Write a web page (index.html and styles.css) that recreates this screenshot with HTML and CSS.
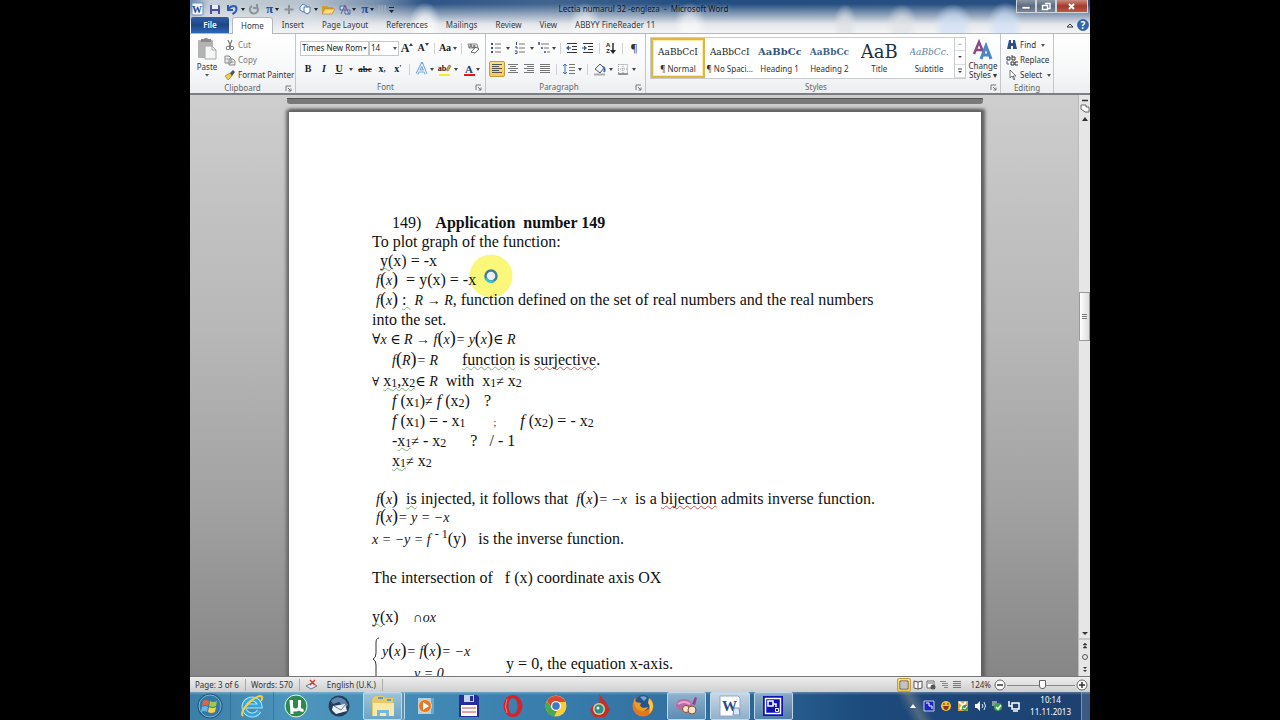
FILE: index.html
```html
<!DOCTYPE html>
<html lang="en">
<head>
<meta charset="utf-8">
<title>Lectia numarul 32 -engleza - Microsoft Word</title>
<link rel="stylesheet" href="styles.css">
</head>
<body>
<div class="desktop">
  <header class="titlebar">
    <div class="quick">
      <svg width="16" height="14" viewBox="0 0 16 14"><rect x="2" y="1" width="11" height="12" rx="1" fill="#f4f8fd" stroke="#6d8fbd"/><text x="2" y="11" class="wmark">W</text></svg>
      <button aria-label="Save"><svg width="18" height="14" viewBox="0 0 18 14"><path d="M4 3h9l1 1v8H4z" fill="#514fa0"/><path d="M6 3h6v4H6z" fill="#eef"/><path d="M6 9h6v3H6z" fill="#cdd4ee"/></svg></button>
      <button aria-label="Undo"><svg width="22" height="14" viewBox="0 0 22 14"><path d="M4 3v5h5M4.500 7c3-4 8-4 8 0 0 2-2 4-4 5" fill="none" stroke="#2f5bab" stroke-width="2"/><path d="M17 6h4l-2 3z" fill="#222"/></svg></button>
      <button aria-label="Repeat"><svg width="16" height="14" viewBox="0 0 16 14"><path d="M6 4a4 4 0 1 0 5 1M11 2v4H7" fill="none" stroke="#8d9297" stroke-width="2"/></svg></button>
      <button aria-label="Equation" class="pi">π<svg width="8" height="14" viewBox="0 0 8 14"><path d="M2 6h4l-2 3z" fill="#222"/></svg></button>
      <button aria-label="Add"><svg width="16" height="14" viewBox="0 0 16 14"><path d="M8 3v9M3.500 7.500h9" stroke="#8b9299" stroke-width="2"/></svg></button>
      <button aria-label="Shapes"><svg width="22" height="14" viewBox="0 0 22 14"><path d="M3 5l3-3 4 2v5l-4 1-3-2z" fill="#e9f1fa" stroke="#5d86b5"/><path d="M7 5h6v5l-3 2-3-2z" fill="#fff" stroke="#4c76ad"/><path d="M17 6h4l-2 3z" fill="#222"/></svg></button>
      <button aria-label="Open"><svg width="18" height="14" viewBox="0 0 18 14"><path d="M3 4h5l1 1h5v7H3z" fill="#d59a2c"/><path d="M3 12l3-5h10l-3 5z" fill="#fbdc7c" stroke="#b37f21" stroke-width=".6"/></svg></button>
      <button aria-label="Diagram"><svg width="20" height="14" viewBox="0 0 20 14"><path d="M3 4h5v4H3zM8 8h5v4H8z" fill="#bdd0ec" stroke="#476ca5"/><path d="M4 12l4-9 4 9" fill="none" stroke="#85527d"/><path d="M15 6h4l-2 3z" fill="#222"/></svg></button>
      <button aria-label="Symbol" class="pi">π<svg width="8" height="14" viewBox="0 0 8 14"><path d="M2 6h4l-2 3z" fill="#222"/></svg></button>
      <button aria-label="Customize toolbar"><svg width="20" height="14" viewBox="0 0 20 14"><path d="M3 3v9M6 3v9M9 3v9" stroke="#aab2b9"/><path d="M13 5.500h5" stroke="#222"/><path d="M13 8h5l-2.500 3z" fill="#222"/></svg></button>
    </div>
    <h1 class="title">Lectia numarul 32 -engleza&nbsp; -&nbsp; Microsoft Word</h1>
    <div class="winbtns">
      <button aria-label="Minimize"><svg width="18" height="11" viewBox="0 0 18 11"><rect x="5" y="5.500" width="8" height="2.500" fill="#fff" stroke="#445" stroke-width=".5"/></svg></button>
      <button aria-label="Restore"><svg width="18" height="11" viewBox="0 0 18 11"><path d="M8 2.500h5v5h-2M5.500 4.500h5v4h-5z" fill="none" stroke="#fff" stroke-width="1.400"/></svg></button>
      <button aria-label="Close" class="close"><svg width="30" height="11" viewBox="0 0 30 11"><path d="M12 3l5 5M17 3l-5 5" stroke="#fff" stroke-width="2"/></svg></button>
    </div>
  </header>

  <nav class="tabs">
    <button class="file">File</button>
    <button class="tab active">Home</button>
    <button class="tab">Insert</button>
    <button class="tab">Page Layout</button>
    <button class="tab">References</button>
    <button class="tab">Mailings</button>
    <button class="tab">Review</button>
    <button class="tab">View</button>
    <button class="tab">ABBYY FineReader 11</button>
    <button class="help first" aria-label="Collapse ribbon"><svg width="12" height="12" viewBox="0 0 12 12"><path d="M3 8l3-3 3 3z" fill="#fff" stroke="#333"/></svg></button>
    <button class="help" aria-label="Help"><svg width="14" height="12" viewBox="0 0 14 12"><circle cx="7" cy="6" r="5.500" fill="#2f66b6" stroke="#1d4586" stroke-width=".6"/><text x="4.500" y="9.500" class="qmark">?</text></svg></button>
  </nav>

  <section class="ribbon">
    <div class="group clip">
      <div class="body">
        <button class="paste"><svg width="22" height="24" viewBox="0 0 22 24"><rect x="2" y="3" width="15" height="18" rx="1" fill="#b3b3b3"/><path d="M5 2h3l1-1h2l1 1h3v3H5z" fill="#8b8b8b"/><path d="M9 9h7l4 4v9H9z" fill="#f6f6f6" stroke="#a8a8a8"/><path d="M16 9v4h4" fill="none" stroke="#a8a8a8"/></svg><span>Paste</span><svg width="6" height="6" viewBox="0 0 6 6"><path d="M1 2h4l-2 2.500z" fill="#555"/></svg></button>
        <div class="stack">
          <button class="dim"><svg width="12" height="12" viewBox="0 0 12 12"><path d="M4 1l3 7M8 1L5 8" stroke="#777" stroke-width="1.200"/><circle cx="4" cy="9" r="1.800" fill="none" stroke="#777"/><circle cx="8" cy="9" r="1.800" fill="none" stroke="#777"/></svg>Cut</button>
          <button class="dim"><svg width="12" height="12" viewBox="0 0 12 12"><path d="M1 2h4l2 2v5H1zM5 5h4l2 2v4H5z" fill="#ececec" stroke="#888"/><path d="M2.500 5h2M6.500 8h3" stroke="#888"/></svg>Copy</button>
          <button><svg width="12" height="12" viewBox="0 0 12 12"><path d="M1 7l5-3 2 3-4 4z" fill="#f3c948" stroke="#8f7430" stroke-width=".6"/><path d="M6 4l3-3 2 2-3 4z" fill="#4e5660"/></svg>Format Painter</button>
        </div>
      </div>
      <div class="label">Clipboard<svg class="launch" width="7" height="7" viewBox="0 0 7 7"><path d="M1 6V1h5M3 3l3 3M6 3.500V6H3.500" fill="none" stroke="#777"/></svg></div>
    </div>

    <div class="group font">
      <div class="body rows">
        <div class="row">
          <span class="combo wide"><select aria-label="Font"><option>Times New Rom</option></select></span>
          <span class="combo"><select aria-label="Font size"><option>14</option></select></span>
          <button class="w16 serif b11" aria-label="Grow font">A<svg width="4" height="10" viewBox="0 0 4 10"><path d="M0 3h4l-2-3z" fill="#345"/></svg></button>
          <button class="w16 serif b9" aria-label="Shrink font">A<svg width="4" height="10" viewBox="0 0 4 10"><path d="M0 0h4l-2 3z" fill="#345"/></svg></button>
          <i class="sep"></i>
          <button class="w20 serif b9" aria-label="Change case">Aa<svg width="6" height="10" viewBox="0 0 6 10"><path d="M2 4h4l-2 3z" fill="#444"/></svg></button>
          <i class="sep"></i>
          <button class="w16" aria-label="Clear formatting"><svg width="14" height="13" viewBox="0 0 14 13"><path d="M2 2h9l1 4H3z" fill="#eee" stroke="#888"/><text x="3" y="6" class="tiny">Aa</text><path d="M5 10l5-5 3 2-4 4z" fill="#fff" stroke="#666"/></svg></button>
        </div>
        <div class="row">
          <button class="w16 serif b9">B</button>
          <button class="w16 serif b9 it">I</button>
          <button class="w24 serif b9"><u>U</u><svg width="10" height="10" viewBox="0 0 10 10"><path d="M6 4h4l-2 3z" fill="#444"/></svg></button>
          <button class="w18 serif b8"><s>abc</s></button>
          <button class="w16 serif b9" aria-label="Subscript">x<small>,</small></button>
          <button class="w16 serif b9" aria-label="Superscript">x<small>'</small></button>
          <i class="sep"></i>
          <button class="w24 glow" aria-label="Text effects"><svg width="23" height="14" viewBox="0 0 23 14"><path d="M3 12L8 2l4 10M5 9h6" fill="none" stroke="#6fa8dc" stroke-width="3"/><path d="M3 12L8 2l4 10M5 9h6" fill="none" stroke="#fff" stroke-width="1"/><path d="M16 6h4l-2 3z" fill="#444"/></svg></button>
          <button class="w24 serif mark" aria-label="Highlight">ab<svg width="14" height="10" viewBox="0 0 14 10"><path d="M0 6l3-5 2 1-3 5z" fill="#caa53c" stroke="#665" stroke-width=".6"/><path d="M8 4h4l-2 3z" fill="#444"/></svg></button>
          <button class="w24 serif red" aria-label="Font color"><span>A</span><svg width="8" height="10" viewBox="0 0 8 10"><path d="M3 4h4l-2 3z" fill="#444"/></svg></button>
        </div>
      </div>
      <div class="label">Font<svg class="launch" width="7" height="7" viewBox="0 0 7 7"><path d="M1 6V1h5M3 3l3 3M6 3.500V6H3.500" fill="none" stroke="#777"/></svg></div>
    </div>

    <div class="group para">
      <div class="body rows">
        <div class="row">
          <button class="w24" aria-label="Bullets"><svg width="24" height="14" viewBox="0 0 24 14"><path d="M2 3h2M2 7h2M2 11h2" stroke="#334d7c" stroke-width="2"/><path d="M6 3h6M6 7h6M6 11h6" stroke="#777"/><path d="M17 6h4l-2 3z" fill="#444"/></svg></button>
          <button class="w24" aria-label="Numbering"><svg width="24" height="14" viewBox="0 0 24 14"><path d="M3.500 1v3M2 6h2v2M2 10h2v2.500H2" fill="none" stroke="#334d7c"/><path d="M6 3h6M6 7h6M6 11h6" stroke="#777"/><path d="M17 6h4l-2 3z" fill="#444"/></svg></button>
          <button class="w20" aria-label="Multilevel list"><svg width="20" height="14" viewBox="0 0 20 14"><path d="M2 1v3M5 6v2M8 10v2" stroke="#334d7c" stroke-width="1.500"/><path d="M4 3h8M7 7h5M10 11h3" stroke="#777"/><path d="M15 6h4l-2 3z" fill="#444"/></svg></button>
          <i class="sep"></i>
          <button class="w16" aria-label="Decrease indent"><svg width="14" height="14" viewBox="0 0 14 14"><path d="M2 2.500h10M7 5.500h5M7 8.500h5M2 11.500h10" stroke="#333"/><path d="M1 7l3-2.500v5z" fill="#345a9b"/><path d="M3 7h3" stroke="#345a9b"/></svg></button>
          <button class="w16" aria-label="Increase indent"><svg width="14" height="14" viewBox="0 0 14 14"><path d="M2 2.500h10M7 5.500h5M7 8.500h5M2 11.500h10" stroke="#333"/><path d="M6 7L3 4.500v5z" fill="#345a9b"/><path d="M1 7h3" stroke="#345a9b"/></svg></button>
          <i class="sep"></i>
          <button class="w16 sort" aria-label="Sort"><span>A<br>Z</span><svg width="6" height="12" viewBox="0 0 6 12"><path d="M3 1v8" stroke="#222" stroke-width="1.400"/><path d="M0 8h6l-3 4z" fill="#222"/></svg></button>
          <i class="sep"></i>
          <button class="w16 pil" aria-label="Show paragraph marks">¶</button>
        </div>
        <div class="row">
          <button class="w16 on" aria-label="Align left"><svg width="12" height="12" viewBox="0 0 12 12"><path d="M1 1.500h10M1 3.500h7M1 5.500h10M1 7.500h7M1 9.500h10" stroke="#555"/></svg></button>
          <button class="w16" aria-label="Center"><svg width="12" height="12" viewBox="0 0 12 12"><path d="M1 1.500h10M3 3.500h6M1 5.500h10M3 7.500h6M1 9.500h10" stroke="#777"/></svg></button>
          <button class="w16" aria-label="Align right"><svg width="12" height="12" viewBox="0 0 12 12"><path d="M1 1.500h10M4 3.500h7M1 5.500h10M4 7.500h7M1 9.500h10" stroke="#777"/></svg></button>
          <button class="w16" aria-label="Justify"><svg width="12" height="12" viewBox="0 0 12 12"><path d="M1 1.500h10M1 3.500h10M1 5.500h10M1 7.500h10M1 9.500h10" stroke="#777"/></svg></button>
          <i class="sep"></i>
          <button class="w24" aria-label="Line spacing"><svg width="22" height="14" viewBox="0 0 22 14"><path d="M4 2v10M2 4l2-2 2 2M2 10l2 2 2-2" fill="none" stroke="#3d6db0"/><path d="M8 2.500h6M8 5.500h6M8 8.500h6M8 11.500h6" stroke="#777"/><path d="M17 6h4l-2 3z" fill="#444"/></svg></button>
          <i class="sep"></i>
          <button class="w24" aria-label="Shading"><svg width="22" height="14" viewBox="0 0 22 14"><path d="M3 7l5-5 4 4-4 5z" fill="#eef3fa" stroke="#456"/><path d="M11 5c2 1 2 3 1 5" stroke="#3d6db0" fill="none" stroke-width="2"/><path d="M2 12.500h11" stroke="#aaa" stroke-width="2"/><path d="M17 6h4l-2 3z" fill="#444"/></svg></button>
          <button class="w24" aria-label="Borders"><svg width="22" height="14" viewBox="0 0 22 14"><path d="M2.500 2.500h9v9M2.500 2v10M7 2v10M2 7h10" fill="none" stroke="#999" stroke-dasharray="1 1"/><path d="M2 12h10" stroke="#333"/><path d="M16 6h4l-2 3z" fill="#444"/></svg></button>
        </div>
      </div>
      <div class="label">Paragraph<svg class="launch" width="7" height="7" viewBox="0 0 7 7"><path d="M1 6V1h5M3 3l3 3M6 3.500V6H3.500" fill="none" stroke="#777"/></svg></div>
    </div>

    <div class="group styles">
      <div class="body">
        <div class="gallery">
          <button class="style sel"><b class="p">AaBbCcI</b><span>¶ Normal</span></button>
          <button class="style"><b class="p">AaBbCcI</b><span>¶ No Spaci...</span></button>
          <button class="style"><b class="p h1">AaBbCc</b><span>Heading 1</span></button>
          <button class="style"><b class="p h2">AaBbCc</b><span>Heading 2</span></button>
          <button class="style"><b class="p tt">AaB</b><span>Title</span></button>
          <button class="style"><b class="p st">AaBbCc.</b><span>Subtitle</span></button>
          <div class="spin">
            <button aria-label="Previous styles"><svg width="6" height="6" viewBox="0 0 6 6"><path d="M1 4h4l-2-2z" fill="#bbb"/></svg></button>
            <button aria-label="Next styles"><svg width="6" height="6" viewBox="0 0 6 6"><path d="M1 2h4l-2 2z" fill="#444"/></svg></button>
            <button aria-label="More styles"><svg width="6" height="6" viewBox="0 0 6 6"><path d="M1 1h4" stroke="#444"/><path d="M1 3h4l-2 2z" fill="#444"/></svg></button>
          </div>
        </div>
        <button class="change"><svg width="22" height="22" viewBox="0 0 22 22"><path d="M2 15L7 3l5 12M4 11h7" fill="none" stroke="#8b4a87" stroke-width="2.500"/><path d="M9 20l5-13 5 13M11 16h7" fill="none" stroke="#4a86c8" stroke-width="3"/></svg><span>Change<br>Styles ▾</span></button>
      </div>
      <div class="label">Styles<svg class="launch" width="7" height="7" viewBox="0 0 7 7"><path d="M1 6V1h5M3 3l3 3M6 3.500V6H3.500" fill="none" stroke="#777"/></svg></div>
    </div>

    <div class="group edit">
      <div class="body">
        <div class="stack">
          <button><svg width="12" height="12" viewBox="0 0 12 12"><path d="M3 1h2v3h2V1h2l2 9H7V7H5v3H1z" fill="#2d4f86"/></svg>Find<svg width="8" height="8" viewBox="0 0 8 8"><path d="M3 3h4l-2 3z" fill="#555"/></svg></button>
          <button><svg width="12" height="12" viewBox="0 0 12 12"><path d="M1 3h3v3H1zM6 1v5h3V3H6M5 8h3v3H5zM12 8H9v3h3" fill="none" stroke="#333"/><path d="M1 7v3h2" fill="none" stroke="#3d6db0"/></svg>Replace</button>
          <button><svg width="12" height="12" viewBox="0 0 12 12"><path d="M4 1v8l2-2 2 4 1-1-2-3h3z" fill="#fff" stroke="#555" stroke-width=".8"/></svg>Select<svg width="8" height="8" viewBox="0 0 8 8"><path d="M3 3h4l-2 3z" fill="#555"/></svg></button>
        </div>
      </div>
      <div class="label">Editing</div>
    </div>
  </section>

  <main class="work">
    <div class="canvas">
      <div class="prev"></div>
      <article class="page">
        <p class="in20"><span>149)</span><strong class="g14">Application&nbsp; number 149</strong></p>
        <p>To plot graph of the function:</p>
        <p class="in8"><span><span class="sq green">y(</span>x) = -x</span></p>
        <p class="busyline"><i class="m in4">f<q>(</q>x<q>)</q></i><span class="g8">= y(x) = -x</span><svg class="busy" width="44" height="44" viewBox="0 0 44 44"><circle cx="22" cy="22" r="21.500" fill="#fbf77a"/><circle cx="22" cy="22" r="5.500" fill="#eef" stroke="#3f7f9c" stroke-width="2.500"/><path d="M17 24a5.500 5.500 0 0 0 8 3" fill="none" stroke="#30c5d2" stroke-width="2.500"/></svg></p>
        <p class="l21"><i class="m in4">f<q>(</q>x<q>)</q></i><span class="sq green g4">:&nbsp;</span><i class="m g4">R <em>→</em> R</i><span>, function defined on the set of real numbers and the real numbers</span></p>
        <p class="l20">into the set.</p>
        <p><i class="m">∀x ∈ R <em>→</em> f<q>(</q>x<q>)</q>= y<q>(</q>x<q>)</q>∈ R</i></p>
        <p class="l21 in20"><i class="m">f<q>(</q>R<q>)</q>= R</i><span class="sq green g24">function</span><span class="g4">is <span class="sq">surjective</span>.</span></p>
        <p class="l21"><i class="m n">∀</i><span class="sq green g4">x<sub>1</sub>,x<sub>2</sub></span><i class="m"><em>∈</em> R</i><span class="g8">with&nbsp; x<sub>1</sub><em>≠</em> x<sub>2</sub></span></p>
        <p class="in20"><span><i>f</i> (x<sub>1</sub>)<em>≠</em> <i>f</i> (x<sub>2</sub>)</span><span class="g14">?</span></p>
        <p class="l21 in20"><span><i>f</i> (x<sub>1</sub>) = - x<sub>1</sub></span><small class="g28">;</small><span class="g24"><i>f</i> (x<sub>2</sub>) = - x<sub>2</sub></span></p>
        <p class="l20 in20"><span>-<span class="sq green">x<sub>1</sub></span><em>≠</em> - x<sub>2</sub></span><span class="g24">?</span><span class="g12">/ - 1</span></p>
        <p class="in20"><span><span class="sq green">x<sub>1</sub></span><em>≠</em> x<sub>2</sub></span></p>
        <p></p>
        <p><i class="m in4">f<q>(</q>x<q>)</q></i><span class="g8"><span class="sq green">is</span> injected, it follows that</span><i class="m g8">f<q>(</q>x<q>)</q>= −x</i><span class="g8">is a <span class="sq">bijection</span> admits inverse function.</span></p>
        <p class="l20"><i class="m in4">f<q>(</q>x<q>)</q>= y = −x</i></p>
        <p class="l21"><i class="m">x = −y = f</i><span class="g4"><sup>- 1</sup>(y)</span><span class="g12">is the inverse function.</span></p>
        <p></p>
        <p class="l20"><span>The intersection of</span><span class="g12">f (x) coordinate axis OX</span></p>
        <p></p>
        <p><span><span class="sq green">y(</span>x)</span><i class="m g14">∩ox</i></p>
        <div class="system"><svg width="8" height="52" viewBox="0 0 8 52"><path d="M7 1Q4 1 4 6v10q0 5-3 6 3 1 3 6v14q0 5 3 5" fill="none" stroke="#333"/></svg><div><i class="m">y<q>(</q>x<q>)</q>= f<q>(</q>x<q>)</q>= −x</i><i class="m in32">y = 0</i></div><span>y = 0, the equation x-axis.</span></div>
      </article>
    </div>
    <aside class="scroll">
      <svg width="12" height="24" viewBox="0 0 12 24"><path d="M3 2.500h6" stroke="#333" stroke-width="1.500"/><path d="M2 7h5v2h3v5H6l-4-3z" fill="#fff" stroke="#666"/><path d="M3 23h6l-3-4z" fill="#333"/></svg>
      <div class="track"><div class="thumb"></div></div>
      <svg width="12" height="48" viewBox="0 0 12 48"><path d="M3 4h6l-3 3z" fill="#333"/><path d="M0 11h12" stroke="#aaa"/><path d="M4 17l2-2 2 2zM4 20l2-2 2 2z" fill="#333" stroke="#333" stroke-width=".5"/><circle cx="6" cy="29" r="2.500" fill="none" stroke="#555"/><path d="M4 39h4l-2 2zM4 42h4l-2 2z" fill="#333"/></svg>
    </aside>
  </main>

  <footer class="status">
    <span class="cell">Page: 3 of 6</span><span class="cell">Words: 570</span>
    <span class="cell"><svg width="14" height="12" viewBox="0 0 14 12"><path d="M1 7l5 3 6-3-5-3z" fill="#dfe8f4" stroke="#678"/><path d="M5 1l5 5M10 1L5 6" stroke="#d43c2e" stroke-width="1.500"/></svg><span class="g8">English (U.K.)</span></span>
    <div class="views">
      <button class="on" aria-label="Print layout"><svg width="12" height="12" viewBox="0 0 12 12"><path d="M2 2h8v8H2z" fill="#fff" stroke="#555"/><path d="M3 4h6M3 6h6M3 8h6" stroke="#888"/></svg></button>
      <button aria-label="Full screen reading"><svg width="12" height="12" viewBox="0 0 12 12"><path d="M2 2l4 1 4-1v7l-4 1-4-1zM6 3v7" fill="#fff" stroke="#555"/></svg></button>
      <button aria-label="Web layout"><svg width="12" height="12" viewBox="0 0 12 12"><path d="M2 2h7v7H2zM3 4h5" fill="#fff" stroke="#666"/><circle cx="8" cy="8" r="2.500" fill="#555"/></svg></button>
      <button aria-label="Outline"><svg width="12" height="12" viewBox="0 0 12 12"><path d="M2 2.500h6M4 4.500h6M4 6.500h6M6 8.500h4" stroke="#888"/></svg></button>
      <button aria-label="Draft"><svg width="12" height="12" viewBox="0 0 12 12"><path d="M2 2.500h8M2 4.500h8M2 6.500h8M2 8.500h8" stroke="#777"/></svg></button>
      <span class="zoom">124%</span>
      <button aria-label="Zoom out"><svg width="12" height="12" viewBox="0 0 12 12"><circle cx="6" cy="6" r="5" fill="#fff" stroke="#666"/><path d="M3 6h6" stroke="#333" stroke-width="1.500"/></svg></button>
      <input type="range" min="0" max="100" value="53" aria-label="Zoom">
      <button aria-label="Zoom in"><svg width="12" height="12" viewBox="0 0 12 12"><circle cx="6" cy="6" r="5" fill="#fff" stroke="#666"/><path d="M3 6h6M6 3v6" stroke="#333" stroke-width="1.500"/></svg></button>
    </div>
  </footer>

  <footer class="taskbar">
    <button class="start" aria-label="Start"><svg width="28" height="26" viewBox="0 0 28 26"><circle cx="14" cy="13" r="12.500" fill="#23567f"/><circle cx="14" cy="13" r="11" fill="#3279a8" stroke="#7fb6d2"/><path d="M7 8q3-2 6 0l-1 5q-3-2-6 0z" fill="#e8623a"/><path d="M14 8q3 2 7 0l-1 5q-4 2-7 0z" fill="#9ccb48"/><path d="M6 14q3-2 6 0l-1 5q-3-2-6 0z" fill="#68b6e8"/><path d="M13 14q3 2 7 0l-1 5q-4 2-7 0z" fill="#f9d24a"/></svg></button>
    <button class="ie" aria-label="Internet Explorer"><svg width="24" height="24" viewBox="0 0 24 24"><path d="M19 17a8 8 0 1 1 1-5H7" fill="none" stroke="#a9e6fb" stroke-width="5"/><path d="M19 17a8 8 0 1 1 1-5H7" fill="none" stroke="#35a5de" stroke-width="3"/><path d="M3 22C-1 18 11 4 20 2q4 0 1 5" fill="none" stroke="#f4cf45" stroke-width="2"/></svg></button>
    <div class="apps">
      <button aria-label="uTorrent"><svg width="24" height="24" viewBox="0 0 24 24"><circle cx="12" cy="12" r="11" fill="#2b8a4e" stroke="#e8f5ec"/><path d="M8 20L7 6M7.500 6v6q0 4 4 4t4-4V6M15.500 13q0 4 4 3" fill="none" stroke="#fff" stroke-width="3"/></svg></button>
      <button aria-label="Thunderbird"><svg width="24" height="24" viewBox="0 0 24 24"><circle cx="12" cy="12" r="10.500" fill="#263c59"/><path d="M4 7q6-7 14-1l3 5-3 3-6-6-6 2z" fill="#5c86ad"/><path d="M6 12l12-2 2 7-11 3-4-4z" fill="#edf2f7"/><path d="M7 12l7 4 5-6" fill="none" stroke="#667c94"/></svg></button>
      <button class="open multi" aria-label="Windows Explorer"><svg width="26" height="24" viewBox="0 0 26 24"><path d="M2 5l3-3h8l2 2h8v18H2z" fill="#e8c765"/><path d="M3 9h21v13H3z" fill="#fae9a6"/><path d="M7 22v-6h12v6h-3v-3h-6v3z" fill="#75b9df"/><path d="M8 4h5M17 6h4" stroke="#5c9bc2" stroke-width="2"/></svg></button>
      <button aria-label="Media Player"><svg width="22" height="22" viewBox="0 0 22 22"><path d="M6 3h13v16H6z" fill="#65a8cf"/><path d="M3 3h13v16H3z" fill="#a9d2e8"/><circle cx="10" cy="11" r="6.500" fill="#e67925" stroke="#f8d3a5"/><path d="M8 7l6 4-6 4z" fill="#fff"/></svg></button>
      <button aria-label="Total Commander"><svg width="22" height="24" viewBox="0 0 22 24"><path d="M1 1h18l2 2v20H1z" fill="#252d9b"/><path d="M6 1h10v7H6z" fill="#c7d3e5"/><path d="M12 2h3v5h-3z" fill="#252d9b"/><path d="M3 11h16v11H3z" fill="#fff"/><path d="M4 14h14M4 18h14" stroke="#c44" /></svg></button>
      <button aria-label="Opera"><svg width="22" height="24" viewBox="0 0 22 24"><path fill-rule="evenodd" d="M11 1a9.500 11 0 1 0 0 22 9.500 11 0 1 0 0-22zm0 3c6 0 6 16 0 16s-6-16 0-16z" fill="#d5232c"/><path d="M5 5q-3 7 0 14" fill="none" stroke="#f47c78"/></svg></button>
      <button aria-label="Chrome"><svg width="24" height="24" viewBox="0 0 24 24"><circle cx="12" cy="12" r="10.500" fill="#f7cf39"/><path d="M3 7a10.500 10.500 0 0 1 18.500 1H12l-4 6z" fill="#dd4635"/><path d="M3 7l6 9 4 1-3 5.500A10.500 10.500 0 0 1 3 7z" fill="#4aa853"/><circle cx="12" cy="12" r="5" fill="#fff"/><circle cx="12" cy="12" r="3.800" fill="#3f78c4"/></svg></button>
      <button aria-label="FireTorrent"><svg width="24" height="24" viewBox="0 0 24 24"><path d="M11 0q7 8 8 10l3 6-5 7H6l-4-7 3-5 3 3q5-8 3-14z" fill="#c42e2c"/><circle cx="11" cy="15" r="6" fill="#d9d09a"/><circle cx="11" cy="15" r="4.500" fill="#2a8d86"/><circle cx="10" cy="14" r="1.500" fill="#dff"/></svg></button>
      <button aria-label="Firefox"><svg width="24" height="24" viewBox="0 0 24 24"><circle cx="12" cy="12" r="10.500" fill="#e77819"/><circle cx="12" cy="9" r="8" fill="#25558e"/><path d="M3 4l2 4 5 1-1 3 3 2 5-1q-2 5-8 4-7-3-6-13z" fill="#ee9a27"/><path d="M18 4q8 8 0 16 2-8-1-11z" fill="#f7ca43"/><path d="M9 3q5-2 7 1l-3 3z" fill="#75aad2"/></svg></button>
      <button class="open" aria-label="Image viewer"><svg width="24" height="22" viewBox="0 0 24 22"><ellipse cx="9" cy="10" rx="8" ry="6" fill="#b96ba4"/><path d="M3 9q6-4 12 0" stroke="#eac" fill="none" stroke-width="2"/><circle cx="11" cy="14" r="3.500" fill="#f4e5c4" stroke="#8b4a38"/><circle cx="17" cy="15" r="4" fill="#f4e5c4" stroke="#8b4a38"/><path d="M17 9l3-7 2 1-2 7z" fill="#9a3d8e"/></svg></button>
      <button class="open bright" aria-label="Microsoft Word"><svg width="24" height="24" viewBox="0 0 24 24"><path d="M2 2h18l2 2v18H2z" fill="#fff" stroke="#8da9c9"/><text x="4" y="17" class="wbig">W</text><path d="M16 14h5l1 7h-7z" fill="#dbe7f6" stroke="#6a8fbd"/></svg></button>
      <button class="open" aria-label="Screen recorder"><svg width="22" height="22" viewBox="0 0 22 22"><path d="M1 1h20v20H1z" fill="#0f14b8"/><path d="M3.500 3.500h15v15h-15z" fill="none" stroke="#fff" stroke-width="1.500"/><path d="M6 6h5v5H6zM11 9h3v3" fill="none" stroke="#fff" stroke-width="1.500"/><path d="M13.500 13.500h3v3h-3z" fill="none" stroke="#fff"/></svg></button>
    </div>
    <div class="tray">
      <svg width="10" height="12" viewBox="0 0 10 12"><path d="M2 8h6L5 4z" fill="#fff"/></svg>
      <svg width="12" height="12" viewBox="0 0 12 12"><path d="M1 1h10v10H1z" fill="#1a25c8" stroke="#ccd"/><path d="M3 3h3v3h3v3" fill="none" stroke="#fff"/></svg>
      <svg width="12" height="12" viewBox="0 0 12 12"><circle cx="6" cy="6" r="5" fill="#f3bd35"/><path d="M3 6h6q-1 4-3 4T3 6" fill="#85361c"/><path d="M4 3v2M8 3v2" stroke="#532"/></svg>
      <svg width="12" height="12" viewBox="0 0 12 12"><path d="M1 1h10v10H1z" fill="#e6a23b"/><path d="M2 2l5 4M9 2L3 9" stroke="#fff" stroke-width="2"/><circle cx="8" cy="8" r="3" fill="#3c9b42"/><path d="M6 8l2 1 2-3" fill="none" stroke="#fff"/></svg>
      <svg width="12" height="12" viewBox="0 0 12 12"><path d="M1 4h2l3-3v10L3 8H1z" fill="#fff"/><path d="M8 4q2 2 0 4M10 2q3 4 0 8" fill="none" stroke="#dce8f3"/></svg>
      <svg width="12" height="12" viewBox="0 0 12 12"><path d="M1 1h5v5H1z" fill="#8b98a2"/><circle cx="7" cy="7" r="4" fill="#39a447"/><path d="M5 7l2 2 3-4" fill="none" stroke="#fff" stroke-width="1.500"/></svg>
      <svg width="12" height="12" viewBox="0 0 12 12"><path d="M4 3h7v6H4zM1 1v5h3M5 11h5" fill="none" stroke="#fff" stroke-width="1.500"/></svg>
      <div class="clock">10:14<br>11.11.2013</div>
      <button class="peek" aria-label="Show desktop"></button>
    </div>
  </footer>
</div>
</body>
</html>
```
FILE: styles.css
```css
* { box-sizing: border-box; }
html, body { margin: 0; height: 100%; background: #000; }
body { display: flex; justify-content: center; font: 8px/12px "Noto Sans", "Open Sans", sans-serif; color: #333; }
button { font: inherit; color: inherit; background: none; border: 0; padding: 0; display: inline-flex; align-items: center; justify-content: center; white-space: nowrap; }
svg { display: block; flex: none; }
p { margin: 0; }

.desktop { height: 100vh; aspect-ratio: 5 / 4; display: flex; flex-direction: column; overflow: hidden; background:
  radial-gradient(ellipse 12px 22px at 655px 26px, #dde0e2aa 40%, transparent 100%),
  radial-gradient(ellipse 16px 22px at 712px 26px, #dfe1e4aa 40%, transparent 100%),
  radial-gradient(ellipse 20px 22px at 763px 26px, #cfe0f6aa 50%, transparent 100%),
  radial-gradient(ellipse 18px 24px at 815px 26px, #cfe0f6aa 50%, transparent 100%),
  radial-gradient(ellipse 16px 24px at 395px 26px, #ffffff88 40%, transparent 100%),
  radial-gradient(ellipse 16px 24px at 500px 26px, #ffffff88 40%, transparent 100%),
  radial-gradient(ellipse 16px 24px at 235px 26px, #ffffffaa 40%, transparent 100%),
  linear-gradient(#fff0 4px, #e4e7ea 24px, #f5f5f6 34px),
  linear-gradient(90deg, #6889ad 0, #c3ced6 20px, #b6c2cd 120px, #7790ad 185px, #2e5586 235px, #416590 360px, #234d80 500px, #2a5182); }

.titlebar { display: flex; height: 17px; }
.quick { flex: 1 1 0; display: flex; align-items: center; }
.pi { font: bold 13px/14px "Liberation Serif", serif; color: #234c95; padding-left: 4px; }
.wmark { font: bold 10px "Liberation Serif", serif; fill: #1d4b93; }
.title { margin: 0; padding-left: 9px; font-size: 8px; font-weight: 400; line-height: 17px; color: #101820; text-shadow: 0 0 4px #c8d5e4aa; }
.winbtns { flex: 1 1 0; display: flex; justify-content: flex-end; padding-right: 2px; height: 13px; }
.winbtns button { background: linear-gradient(#8c97a5, #5d6c80 50%, #78879a); border: 1px solid #d0d5da; border-top: 0; }
.winbtns .close { background: linear-gradient(#c88d80, #a53a2a 50%, #b95a46); }

.tabs { display: flex; height: 17px; align-items: stretch; padding-left: 1px; border-bottom: 1px solid #b4b8bd; font-size: 8px; }
.file { width: 38px; color: #fff; font-weight: 600; background: linear-gradient(#2f5fa8, #1d4688 50%, #2d68b8); border-radius: 2px 2px 0 0; }
.tab { padding: 0 9px; color: #33383e; }
.tab.active { background: #fff; border: 1px solid #b4b8bd; border-bottom: 0; border-radius: 3px 3px 0 0; margin: 0 0 -1px 3px; padding: 0 8px; }
.help.first { margin-left: auto; }
.qmark { font: bold 10px "Noto Sans", sans-serif; fill: #fff; }

.ribbon { display: flex; height: 61px; background: linear-gradient(#fff, #f7f8f9 60%, #eceef0); border-bottom: 2px solid #7c7f83; }
.group { display: flex; flex-direction: column; border-right: 1px solid #c3c6ca; padding-top: 3px; }
.body { flex: 1; display: flex; }
.label { height: 12px; text-align: center; color: #666; position: relative; }
.launch { position: absolute; right: 3px; top: 3px; }
.clip { flex: 0 0 106px; }
.font { flex: 0 0 190px; padding-left: 4px; }
.para { flex: 0 0 160px; padding-left: 3px; }
.para .label { padding-right: 16px; }
.font .label { padding-right: 14px; }
.styles .label { padding-right: 18px; }
.styles { flex: 1 1 0; padding-left: 4px; }
.edit { flex: 0 0 53px; }
.ribbon::after { content: ""; flex: 0 0 36px; }
.paste { flex-direction: column; justify-content: flex-start; width: 34px; line-height: 11px; }
.stack { display: flex; flex-direction: column; }
.stack button { height: 15px; gap: 2px; justify-content: flex-start; }
.edit .stack { padding-left: 5px; }
.dim { color: #777; }

.rows { flex-direction: column; gap: 5px; padding-top: 3px; }
.row { display: flex; height: 16px; align-items: center; }
.row button { height: 16px; flex: none; }
.combo { position: relative; width: 30px; height: 15px; border: 1px solid #c4c8cc; background: #fff; }
.combo.wide { width: 69px; }
.combo::after { content: ""; position: absolute; right: 1px; top: 5px; border: 2px solid transparent; border-top: 3px solid #555; }
select { appearance: none; width: 100%; height: 13px; border: 0; background: none; padding: 0 0 0 1px; font: inherit; color: #222; }
.w16 { width: 16px; }
.w18 { width: 18px; }
.w20 { width: 20px; }
.w24 { width: 24px; }
.row .sep { width: 1px; height: 11px; background: #cfd2d5; margin: 0 3px; flex: none; }
.serif { font-family: "Liberation Serif", serif; color: #222; }
.b11 { font-size: 12px; font-weight: 700; }
.b9 { font-size: 10px; font-weight: 700; }
.b8 { font-size: 9px; font-weight: 700; }
.it { font-style: italic; }
.mark { font-weight: 700; background: linear-gradient(#f6ee24, #f6ee24) 2px 13px / 11px 2px no-repeat; }
.red { font-size: 11px; font-weight: 700; color: #243f6c; background: linear-gradient(#e11, #e11) 3px 13px / 11px 2px no-repeat; }
.sort span { font-size: 6px; line-height: 6px; font-weight: 700; }
.pil { font-size: 11px; }
.row .on, .views .on { background: linear-gradient(#fbe08a, #f9c94e); border: 1px solid #c39b3f; border-radius: 2px; }

.gallery { flex: 1; display: flex; height: 42px; border: 1px solid #c9cccf; background: #fff; }
.style { flex: 1 1 0; min-width: 0; flex-direction: column; justify-content: flex-end; overflow: hidden; line-height: 13px; padding-bottom: 3px; }
.sel { border: 2px solid #dfb545; padding-bottom: 1px; box-shadow: inset 0 0 0 1px #fbeaa6; }
.p { font: 9px/20px "DejaVu Serif", serif; color: #222; height: 20px; max-width: 43px; overflow: hidden; }
.h1 { font-weight: 700; font-size: 10px; color: #33557f; }
.h2 { color: #3f648e; font-weight: 700; }
.tt { font-size: 18px; color: #1e2f45; }
.st { font-style: italic; color: #5b84a5; }
.spin { width: 11px; display: flex; flex-direction: column; border-left: 1px solid #c9cccf; }
.spin button { flex: 1; border-bottom: 1px solid #d9dbdd; }
.change { width: 34px; flex-direction: column; line-height: 9px; height: 43px; }
.tiny { font: bold 5px "Noto Sans", sans-serif; fill: #555; }

.work { flex: 1; min-height: 0; display: flex; background: linear-gradient(#cecece, #c2c2c2 20%, #b8b8b8 40%, #a2a2a2 70%, #868686); }
.canvas { flex: 1; min-width: 0; padding: 3px 97px 0 99px; overflow: hidden; }
.prev { height: 6px; background: #77797a; border-top: 1px solid #555; border-radius: 0 0 3px 3px; margin: 0 -2px 7px; }
.page { position: relative; z-index: 0; background: #fff; min-height: 100%; border-top: 1px solid #666; box-shadow: 2px 0 3px 2px #606060, -2px 0 3px 1px #707070; padding: 101px 80px 0 83px; font: 16px/19px "Liberation Serif", "DejaVu Serif", serif; color: #111; }
.page p { display: flex; align-items: baseline; height: 19px; white-space: nowrap; position: relative; }
.page p.l20 { height: 20px; line-height: 20px; }
.page p.l21 { height: 21px; line-height: 21px; }
.page .m { font-size: 14px; }
.m q { quotes: none; font-style: normal; font-size: 18px; line-height: 1px; }
.m q::before, .m q::after { content: none; }
.page em { font-style: normal; font-size: 14px; line-height: 1px; }
.page .n { font-style: normal; font-size: 12px; }
.page sub, .page sup { font-size: 12px; line-height: 1px; }
.page sub { vertical-align: -1px; }
.page small { font-size: 10px; }
.sq { text-decoration: underline wavy #d65050 1px; text-underline-offset: 1px; text-decoration-skip-ink: none; }
.green { text-decoration-color: #7fae7f; }
.page .in4 { margin-left: 4px; }
.page .in8 { padding-left: 8px; }
.page .in20 { padding-left: 20px; }
.page .in32 { padding-left: 32px; }
.g4 { margin-left: 4px; }
.g8 { margin-left: 8px; }
.g12 { margin-left: 12px; }
.g14 { margin-left: 14px; }
.g24 { margin-left: 24px; }
.g28 { margin-left: 28px; }
.busy { position: absolute; left: 97px; top: -16px; z-index: -1; }
.system { display: flex; gap: 36px; align-items: center; height: 54px; margin-top: 10px; }
.system svg { margin-right: -34px; }
.system div { display: flex; flex-direction: column; line-height: 22px; }

.scroll { width: 12px; background: #e6e6e6; border-left: 1px solid #bbb; display: flex; flex-direction: column; padding-top: 3px; }
.track { flex: 1; display: flex; flex-direction: column; padding-top: 170px; }
.thumb { height: 49px; border: 1px solid #999; background: linear-gradient(#777, #777) 50% 45% / 5px 1px no-repeat, linear-gradient(#777, #777) 50% 50% / 5px 1px no-repeat, linear-gradient(#777, #777) 50% 55% / 5px 1px no-repeat, linear-gradient(90deg, #fff, #ddd); }

.status { height: 16px; display: flex; align-items: center; background: linear-gradient(#eee, #cfcfcf); border-top: 1px solid #777; }
.cell { display: flex; align-items: center; padding: 0 6px 0 5px; border-right: 1px solid #aaa; }
.views { margin-left: auto; display: flex; align-items: center; gap: 1px; padding-right: 2px; }
.zoom { padding: 0 2px 0 7px; }
.views input { appearance: none; width: 68px; height: 12px; margin: 0; background: linear-gradient(#888, #888) 0 6px / 100% 1px no-repeat; }
.views input::-webkit-slider-thumb { appearance: none; width: 7px; height: 9px; background: #fff; border: 1px solid #666; border-radius: 0 0 3px 3px; }

.taskbar { height: 28px; display: flex; background: linear-gradient(#ffffff44, #fff0 3px), linear-gradient(90deg, #3c7ea6, #4c96bd 12%, #397fae 38%, #2f6b9c 60%, #1c4a7c 75%, #1c4170); }
.taskbar button { height: 28px; }
.start { width: 40px; }
.ie { width: 44px; }
.taskbar .ie { border: solid #1f547c66; border-width: 0 1px; }
.start, .ie { flex: none; }
.apps { flex: 1; display: flex; }
.apps button { flex: 1 1 0; margin: 0 2px; border: 1px solid transparent; }
.apps .open { border: 1px solid #bdd8ea; border-radius: 2px; background: linear-gradient(#ffffff77, #ffffff33); }
.apps .multi { box-shadow: 2px 0 #5b93b8, 3px 0 #bdd8ea; }
.apps .bright { background: linear-gradient(#ffffffbb, #ffffff77); }
.wbig { font: bold 15px "Liberation Serif", serif; fill: #1f4d86; }
.tray { flex: 0 0 295px; display: flex; align-items: center; justify-content: flex-end; gap: 5px; color: #fff; background: linear-gradient(62deg, #fff0 37%, #a19b8a66 41%, #fff0 45%); }
.clock { text-align: center; margin: 0 5px; white-space: nowrap; }
.peek { width: 9px; border-left: 1px solid #7893ae; background: #ffffff22; }
```
